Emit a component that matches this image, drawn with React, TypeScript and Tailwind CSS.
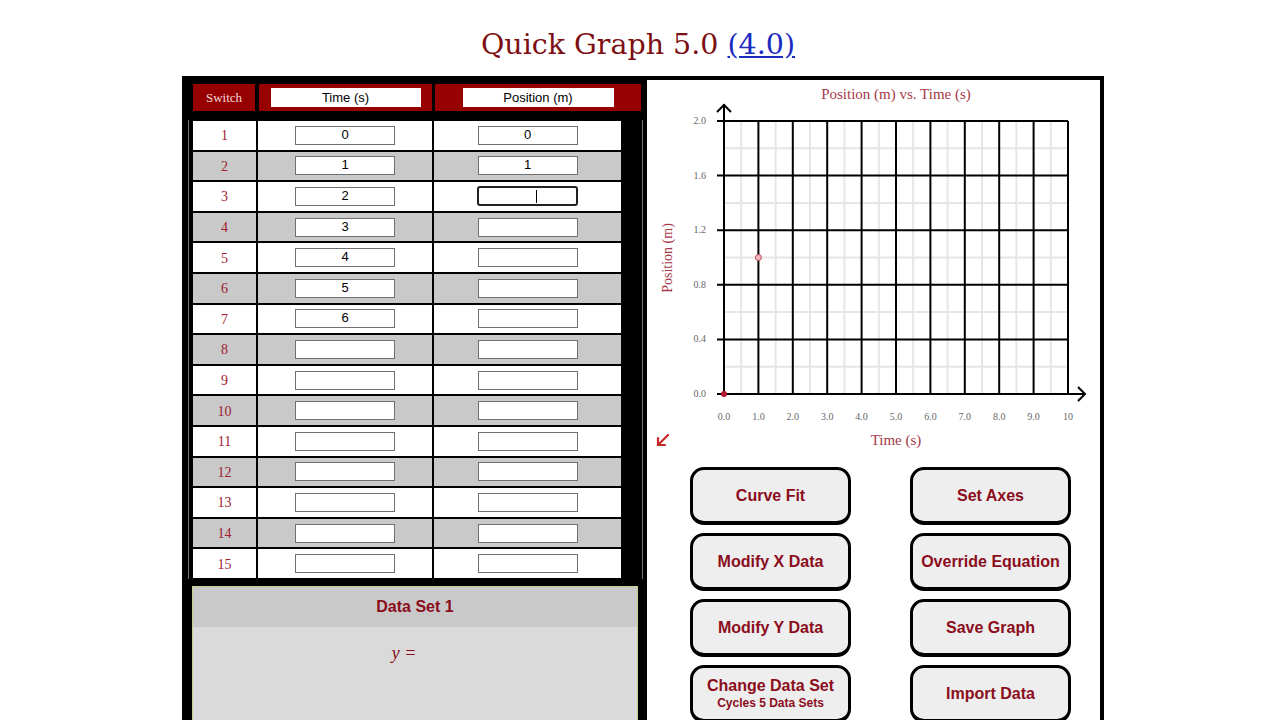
import React from "react";

const rows = Array.from({ length: 15 }, (_, i) => i + 1);
const timeVals: Record<number, string> = { 1: "0", 2: "1", 3: "2", 4: "3", 5: "4", 6: "5", 7: "6" };
const posVals: Record<number, string> = { 1: "0", 2: "1" };

const serif = { fontFamily: '"Liberation Serif", "DejaVu Serif", serif' };
const wideSerif = { fontFamily: '"DejaVu Serif", "Liberation Serif", serif' };

function Chart() {
  // plot box inside the svg
  const L = 77;
  const R = 421;
  const T = 41;
  const B = 314;
  const dx = (R - L) / 10;
  const dy = (B - T) / 5;

  const minorX = Array.from({ length: 10 }, (_, i) => L + dx * i + dx / 2);
  const minorY = Array.from({ length: 5 }, (_, i) => T + dy * i + dy / 2);
  const majorX = Array.from({ length: 11 }, (_, i) => L + dx * i);
  const majorY = Array.from({ length: 6 }, (_, i) => T + dy * i);
  const xLabels = ["0.0", "1.0", "2.0", "3.0", "4.0", "5.0", "6.0", "7.0", "8.0", "9.0", "10"];
  const yLabels = ["2.0", "1.6", "1.2", "0.8", "0.4", "0.0"];

  return (
    <svg width="453" height="380" viewBox="0 0 453 380" className="block" style={serif}>
      <text x="249" y="19" textAnchor="middle" fontSize="15" fill="#a5384a">
        Position (m) vs. Time (s)
      </text>

      {minorX.map((x) => (
        <line key={"mx" + x} x1={x} y1={T} x2={x} y2={B} stroke="#e6e6e6" strokeWidth="2" />
      ))}
      {minorY.map((y) => (
        <line key={"my" + y} x1={L} y1={y} x2={R} y2={y} stroke="#e6e6e6" strokeWidth="2" />
      ))}
      {majorX.map((x) => (
        <line key={"Mx" + x} x1={x} y1={T} x2={x} y2={B} stroke="#000" strokeWidth="2" />
      ))}
      {majorY.map((y) => (
        <line key={"My" + y} x1={70} y1={y} x2={R} y2={y} stroke="#000" strokeWidth="2" />
      ))}

      {/* axes with arrows */}
      <line x1={L} y1={B} x2={L} y2={24} stroke="#000" strokeWidth="2" />
      <polyline points={`${L - 7},32 ${L},25 ${L + 7},32`} fill="none" stroke="#000" strokeWidth="2" />
      <line x1={L} y1={B} x2={438} y2={B} stroke="#000" strokeWidth="2" />
      <polyline points={`431,${B - 7} 438,${B} 431,${B + 7}`} fill="none" stroke="#000" strokeWidth="2" />

      {yLabels.map((t, i) => (
        <text key={"yl" + t} x="59" y={majorY[i] + 3} textAnchor="end" fontSize="10" fill="#666">
          {t}
        </text>
      ))}
      {xLabels.map((t, i) => (
        <text key={"xl" + t} x={majorX[i]} y="340" textAnchor="middle" fontSize="10" fill="#666">
          {t}
        </text>
      ))}

      <text x="249" y="365" textAnchor="middle" fontSize="15" fill="#a5384a">
        Time (s)
      </text>
      <text
        x="0"
        y="0"
        transform="translate(25,178) rotate(-90)"
        textAnchor="middle"
        fontSize="14"
        fill="#a5384a"
      >
        Position (m)
      </text>

      {/* data points */}
      <circle cx={L} cy={B} r="3" fill="#b01c2e" />
      <circle cx={L + dx} cy={B - dy * 2.5} r="3" fill="#f2b6bd" stroke="#c0485a" strokeWidth="1" />

      {/* little red arrow */}
      <g stroke="#c62828" strokeWidth="2.2" fill="none" strokeLinecap="round">
        <line x1="21" y1="355" x2="11" y2="365" />
        <polyline points="11,358 11,365 18,365" />
      </g>
    </svg>
  );
}

function Btn({ label, sub }: { label: string; sub?: string }) {
  return (
    <button className="flex h-[58px] w-[161px] flex-col items-center justify-center rounded-[14px] border-[3px] border-b-4 border-black bg-[#eeeeee] font-bold leading-tight text-[#8b0d1c]">
      <span className="text-[16px]">{label}</span>
      {sub && <span className="text-[12px]">{sub}</span>}
    </button>
  );
}

export default function App() {
  return (
    <div className="min-h-screen overflow-hidden bg-white" style={{ fontFamily: '"Liberation Sans", Arial, sans-serif' }}>
      <div className="flex h-[76px] items-start justify-center pr-[4px] pt-[25px]">
        <h1 className="text-[28.5px] leading-[40px] text-[#7d0f12]" style={wideSerif}>
          Quick Graph 5.0{" "}
          <a href="#" className="text-[#1a2bbf] underline">
            (4.0)
          </a>
        </h1>
      </div>

      <div className="ml-[182px] flex h-[660px] w-[922px] border-t-4 border-black">
        {/* data table side */}
        <div className="w-[465px] shrink-0 bg-black pt-1">
          <div className="flex h-[27px] gap-[3px] pl-[11px]">
            <div className="flex w-[62px] items-center justify-center bg-[#960000] text-[13px] text-[#f3d9d9]" style={serif}>
              Switch
            </div>
            <div className="ml-[1px] flex w-[173px] items-center justify-center bg-[#960000]">
              <div className="flex h-[19px] w-[150px] items-center justify-center bg-white text-[13px] text-black">Time (s)</div>
            </div>
            <div className="flex w-[206px] items-center justify-center bg-[#960000]">
              <div className="flex h-[19px] w-[151px] items-center justify-center bg-white text-[13px] text-black">Position (m)</div>
            </div>
          </div>

          <div className="ml-[6px] mt-[9px] flex w-[455px] flex-col gap-[2px] border-x border-[#777] py-[1px] pl-[4px]">
            {rows.map((n) => {
              const bg = n % 2 === 0 ? "bg-[#c9c9c9]" : "bg-white";
              return (
                <div key={n} className="flex h-[28.6px] gap-[2px]">
                  <div className={`flex w-[63px] items-center justify-center pt-[1px] text-[14px] text-[#9e2030] ${bg}`} style={serif}>
                    {n}
                  </div>
                  <div className={`flex w-[174px] items-center justify-center ${bg}`}>
                    <div className="flex h-[19px] w-[100px] items-start justify-center border border-[#707070] bg-white text-[13px] leading-[15px] text-black">
                      {timeVals[n] ?? ""}
                    </div>
                  </div>
                  <div className={`flex w-[187px] items-center justify-center ${bg}`}>
                    {n === 3 ? (
                      <div className="flex h-[20px] w-[101px] items-center justify-center rounded-[3px] border-2 border-[#222] bg-white">
                        <span className="ml-[18px] h-[13px] w-[1px] bg-black" />
                      </div>
                    ) : (
                      <div className="flex h-[19px] w-[100px] items-start justify-center border border-[#707070] bg-white text-[13px] leading-[15px] text-black">
                        {posVals[n] ?? ""}
                      </div>
                    )}
                  </div>
                </div>
              );
            })}
          </div>

          <div className="ml-[10px] mt-[7px] flex h-[140px] w-[446px] flex-col border border-[#c9cf86] bg-[#dadada]">
            <div className="flex h-[40px] items-center justify-center bg-[#c9c9c9] text-[16px] font-bold text-[#8b0d1c]">
              Data Set 1
            </div>
            <div className="flex justify-center pr-[22px] pt-[13px] text-[18px] italic text-[#8b0d1c]" style={serif}>
              y =
            </div>
          </div>
        </div>

        {/* graph side */}
        <div className="flex w-[457px] shrink-0 flex-col border-r-4 border-black bg-white">
          <Chart />
          <div className="grid grid-cols-[161px_161px] gap-x-[59px] gap-y-[8px] pl-[43px] pt-[7px]">
            <Btn label="Curve Fit" />
            <Btn label="Set Axes" />
            <Btn label="Modify X Data" />
            <Btn label="Override Equation" />
            <Btn label="Modify Y Data" />
            <Btn label="Save Graph" />
            <Btn label="Change Data Set" sub="Cycles 5 Data Sets" />
            <Btn label="Import Data" />
          </div>
        </div>
      </div>
    </div>
  );
}
